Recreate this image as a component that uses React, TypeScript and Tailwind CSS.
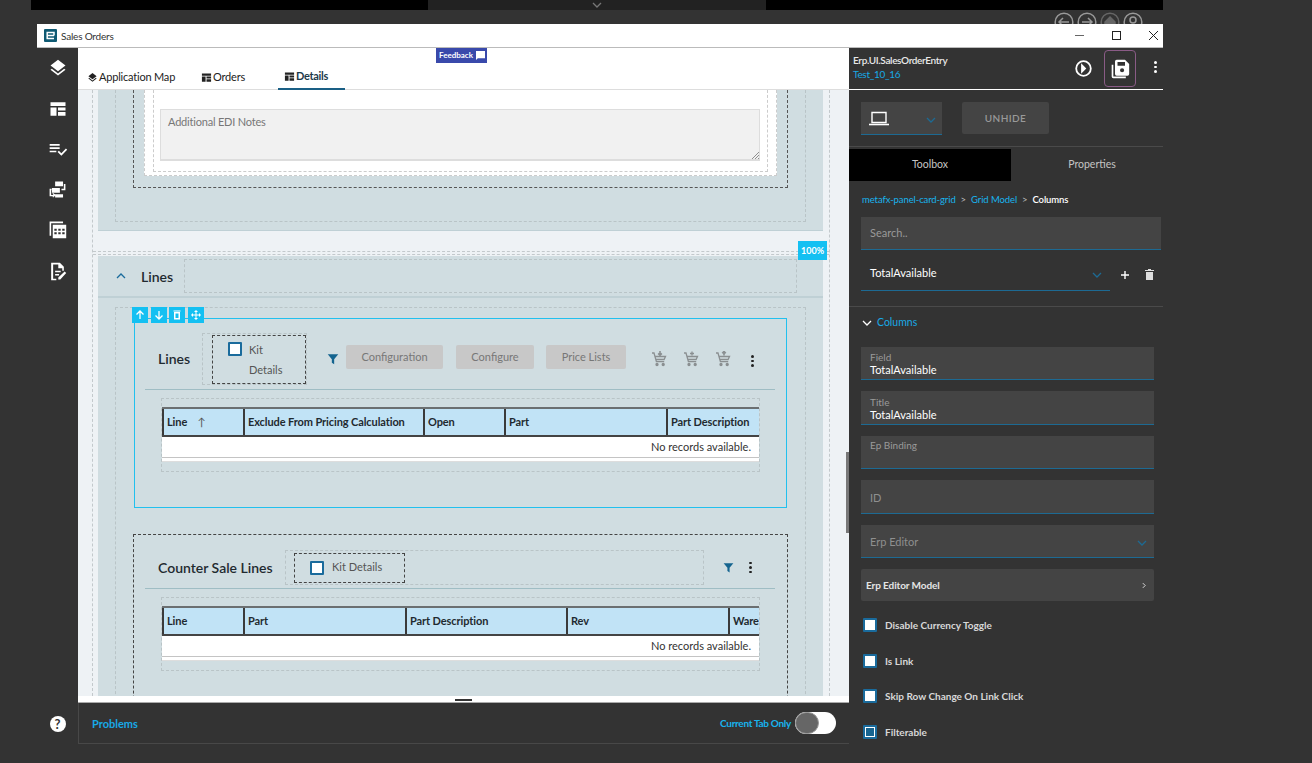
import type { ReactNode } from 'react'

/* Small inline icons: everything here is a 24 box unless noted */
function Ico({ size, className, children }: { size: number; className?: string; children: ReactNode }) {
  return (
    <svg width={size} height={size} viewBox="0 0 24 24" fill="currentColor" className={className}>
      {children}
    </svg>
  )
}

const LAYERS =
  'M11.99 18.54l-7.37-5.73L3 14.07l9 7 9-7-1.63-1.27-7.38 5.74zM12 16l7.36-5.73L21 9l-9-7-9 7 1.63 1.27L12 16z'
const TABLE = 'M2 3h20v5H2zM2 10h8v11H2zM12 10h10v4H12zM12 16h10v5H12z'
const FILTER = 'M3 4h18l-7 8.5V21l-4-2.5v-6z'

function Cart({ kind }: { kind: 'down' | 'plus' | 'up' }) {
  return (
    <svg width="16" height="16" viewBox="0 0 16 16" fill="none" stroke="#8a8f91" strokeWidth="1.3">
      <path d="M1 2h2l2.4 8.6h7.8M4 5.5h10.5l-1.4 3H4.8" />
      <circle cx="6" cy="13.5" r="1" fill="#8a8f91" />
      <circle cx="12.2" cy="13.5" r="1" fill="#8a8f91" />
      {kind === 'down' && <path d="M9 0v4M7.2 2.4L9 4.4l1.8-2" strokeWidth="1.6" />}
      {kind === 'plus' && <path d="M9 0.5v4M7 2.5h4" strokeWidth="1.3" />}
      {kind === 'up' && <path d="M9 4.5v-4M7.2 2.2L9 0.4l1.8 1.8" strokeWidth="1.6" />}
    </svg>
  )
}

function Kebab({ className }: { className: string }) {
  return (
    <span className={`flex flex-col gap-[2px] ${className}`}>
      <span className="h-[2.5px] w-[2.5px] rounded-full bg-current" />
      <span className="h-[2.5px] w-[2.5px] rounded-full bg-current" />
      <span className="h-[2.5px] w-[2.5px] rounded-full bg-current" />
    </span>
  )
}

function Chevron({ className }: { className: string }) {
  return (
    <svg width="10" height="6" viewBox="0 0 10 6" fill="none" stroke="currentColor" strokeWidth="1.3" className={className}>
      <path d="M1 1l4 4 4-4" />
    </svg>
  )
}

function NavCircle({ dim, d }: { dim?: boolean; d: string }) {
  return (
    <svg width="20" height="20" viewBox="0 0 20 20" fill="none" stroke={dim ? '#666' : '#999'} strokeWidth="1.5">
      <circle cx="10" cy="10" r="8.8" />
      <path d={d} fill={dim ? '#666' : 'none'} />
    </svg>
  )
}

function GridTable({ cols }: { cols: { label: string; w: number; sort?: boolean }[] }) {
  return (
    <div className="mt-[8px] h-[74px] w-[599px] border border-dashed border-[#b9c4c7] pt-[8px]">
      <div className="flex h-[30px] w-[597px] overflow-hidden border-t-2 border-b-2 border-t-[#6b6f71] border-b-[#444] bg-[#c1e3f6]">
        {cols.map((c) => (
          <div
            key={c.label}
            style={{ width: c.w }}
            className="flex shrink-0 items-center overflow-hidden whitespace-nowrap border-l-2 border-[#3a3a3a] pl-[3px] text-[11px] font-bold tracking-[-0.1px] text-[#1f2a30]"
          >
            {c.label}
            {c.sort && <span className="ml-[10px] text-[11px] font-normal text-[#555]">↑</span>}
          </div>
        ))}
      </div>
      <div className="flex h-[20px] w-[597px] items-center justify-end bg-white pr-[8px] text-[11px] text-[#333]">
        No records available.
      </div>
      <div className="h-[5px] w-[597px] border-t border-b border-t-[#c4c4c4] border-b-[#ddd] bg-white" />
    </div>
  )
}

function Field({ label, value, tall, mt }: { label: string; value?: string; tall?: boolean; mt: string }) {
  return (
    <div className={`${mt} ${tall ? 'h-[34px]' : 'h-[33px]'} ml-[12px] flex w-[293px] flex-col justify-center border-b border-[#1d6a93] bg-[#444] pl-[9px] pt-[3px]`}>
      {value ? (
        <>
          <span className="text-[10px] leading-[11px] text-[#9a9a9a]">{label}</span>
          <span className="text-[11px] leading-[14px] text-white">{value}</span>
        </>
      ) : (
        <span className="text-[11px] text-[#8f8f8f]">{label}</span>
      )}
    </div>
  )
}

function Check({ label, on, mt }: { label: string; on?: boolean; mt: string }) {
  return (
    <div className={`${mt} ml-[14px] flex h-[14px] items-center`}>
      <span className={`h-[14px] w-[14px] rounded-[1px] border-2 border-[#1a6b9c] ${on ? 'bg-[#17648f] outline outline-1 -outline-offset-3 outline-white' : 'bg-white'}`} />
      <span className="ml-[8px] text-[10px] font-bold text-[#d8d8d8]">{label}</span>
    </div>
  )
}

function Sidebar() {
  return (
    <div className="flex w-[41px] shrink-0 flex-col items-center text-white">
      <Ico size={20} className="mt-[10px]"><path d={LAYERS} /></Ico>
      <Ico size={18} className="mt-[22px]"><path d={TABLE} /></Ico>
      <Ico size={20} className="mt-[21px]">
        <path d="M14 10H2v2h12v-2zm0-4H2v2h12V6zM2 16h8v-2H2v2zm19.5-4.5L23 13l-6.99 7-4.51-4.5L13 14l3.01 3 5.49-5.5z" />
      </Ico>
      <Ico size={19} className="mt-[21px]">
        <path d="M9 2h10v6H9zM5 10h10v6H5zM9 18h10v4H9zM20 5h2v8h-5v-2h3zM3 11h1.500v2H4v6h3l-1.500-1.500 1-1L10 19l-3.500 3-1-1L7 20.500H2V11z" />
      </Ico>
      <Ico size={19} className="mt-[21px]">
        <path d="M2 2h17v2H4v16H2z" />
        <path fillRule="evenodd" d="M6 6h17v17H6zM8 11v2.500h3V11zm5 0v2.500h3V11zm5 0v2.500h3V11zM8 15.500V18h3v-2.500zm5 0V18h3v-2.500zm5 0V18h3v-2.500z" />
      </Ico>
      <Ico size={19} className="mt-[23px]">
        <path d="M5 1h10l5 5v5h-2V8h-5V3H6.500v18h4v2H4V1zM9 11h7v2H9zM9 15h5v2H9zM21 12l2 2-7.500 8H13v-2.500z" />
      </Ico>
      <div className="mt-[435px] flex h-[16px] w-[16px] items-center justify-center rounded-full bg-white text-[13px] font-bold leading-none text-[#333]">
        ?
      </div>
    </div>
  )
}

function MainPanel() {
  return (
    <div className="flex w-[771px] shrink-0 flex-col">
      {/* tab strip */}
      <div className="relative flex h-[42px] shrink-0 items-end border-b border-[#ddd] bg-white text-[11px] tracking-[-0.2px] text-[#222]">
        <div className="ml-[9px] flex h-[24px] w-[114px] items-center">
          <Ico size={11} className="text-[#222]"><path d={LAYERS} /></Ico>
          <span className="ml-[1px]">Application Map</span>
        </div>
        <div className="flex h-[24px] w-[77px] items-center">
          <Ico size={11}><path d={TABLE} /></Ico>
          <span className="ml-[1px]">Orders</span>
        </div>
        <div className="mb-[-1px] flex h-[25px] w-[67px] items-center border-b-2 border-[#1a5f85] pl-[6px]">
          <Ico size={11}><path d={TABLE} /></Ico>
          <span className="ml-[1px] font-bold tracking-[-0.3px] text-[#1b3a4b]">Details</span>
        </div>
        <div className="absolute left-[358px] top-0 flex h-[15px] w-[51px] items-center bg-[#3949ab] pb-[1px] pl-[3px] text-[8px] font-bold tracking-normal text-white">
          Feedback
          <svg width="9" height="9" viewBox="0 0 10 10" className="ml-[3px]" fill="white"><path d="M0 0h10v8H2L0 10z" /></svg>
        </div>
      </div>

      {/* design canvas, scrolled so that the first card is cut off at the top */}
      <div className="relative h-[606px] shrink-0 overflow-hidden bg-[#eef2f5]">
        <div className="ml-[14px] h-[606px] w-[738px] border-x border-dashed border-[#c3c9cc]">
          <div className="ml-[5px] h-[141px] w-[725px] border-b border-[#bfd0d5] bg-[#d0dde1]">
            <div className="ml-[17px] h-[132px] w-[691px] border-x border-b border-dashed border-[#b9c4c7]">
              <div className="ml-[17px] h-[98px] w-[655px] border-x border-b border-dashed border-[#555]">
                <div className="ml-[10px] h-[86px] w-[633px] border-x border-b border-dashed border-[#ccc] bg-white">
                  <div className="ml-[8px] h-[82px] w-[615px] border-x border-b border-dashed border-[#ccc] pl-[6px] pt-[19px]">
                    <div className="relative h-[52px] w-[600px] border border-b-2 border-[#ddd] bg-[#f1f1f1] pl-[7px] pt-[4px] text-[11px] tracking-[-0.2px] text-[#777]">
                      Additional EDI Notes
                      <svg width="8" height="8" viewBox="0 0 8 8" stroke="#777" strokeWidth="0.8" className="absolute bottom-0 right-0">
                        <path d="M1 8l7-7M4 8l4-4M7 8l1-1" />
                      </svg>
                    </div>
                  </div>
                </div>
              </div>
            </div>
          </div>
          <div className="mt-[20px] h-[4px] border-y border-dashed border-[#c3c9cc]" />

          <div className="ml-[5px] mt-[1px] w-[725px] bg-[#d0dde1]">
            {/* Lines panel header */}
            <div className="flex h-[42px] items-center border-b-2 border-[#bfd0d5]">
              <Chevron className="ml-[18px] rotate-180 text-[#1a6b9c]" />
              <span className="ml-[15px] w-[43px] text-[14px] font-semibold text-[#1f2a30]">Lines</span>
              <div className="h-[34px] w-[613px] border border-dashed border-[#b9c4c7]" />
            </div>

            <div className="ml-[17px] mt-[9px] w-[691px] border-x border-t border-dashed border-[#b9c4c7] pt-[10px]">
              {/* selected card */}
              <div className="relative ml-[18px] h-[190px] w-[653px] border border-[#22c0ee]">
                <div className="absolute -left-[3px] -top-[12px] flex gap-[2.5px]">
                  {[
                    <path key="a" d="M12 20V5M5 11l7-7 7 7" fill="none" stroke="white" strokeWidth="2.500" />,
                    <path key="b" d="M12 4v15M5 13l7 7 7-7" fill="none" stroke="white" strokeWidth="2.500" />,
                    <path key="c" fillRule="evenodd" d="M5 3h14v2H5zM6 6h12v15H6zM9 9v9h6V9z" fill="white" />,
                    <path key="d" d="M12 2l4 4h-3v5h5V8l4 4-4 4v-3h-5v5h3l-4 4-4-4h3v-5H6v3l-4-4 4-4v3h5V6H8z" fill="white" />,
                  ].map((p) => (
                    <span key={p.key} className="flex h-[16px] w-[16px] items-center justify-center bg-[#14c0f2]">
                      <svg width="12" height="12" viewBox="0 0 24 24">{p}</svg>
                    </span>
                  ))}
                </div>

                <div className="mt-[14px] flex h-[52px] items-center">
                  <span className="ml-[23px] w-[44px] pb-[1px] text-[14px] font-semibold text-[#1f2a30]">Lines</span>
                  <div className="flex h-[52px] w-[105px] items-center border border-dashed border-[#b9c4c7] pl-[9px]">
                    <div className="flex h-[49px] w-[94px] border border-dashed border-[#444] pl-[15px] pt-[6px]">
                      <span className="h-[14px] w-[14px] shrink-0 rounded-[1px] border-2 border-[#1a6b9c] bg-white" />
                      <span className="-mt-[2px] ml-[7px] w-[40px] text-[11px] leading-[20px] text-[#555]">Kit Details</span>
                    </div>
                  </div>
                  <Ico size={14} className="ml-[19px] text-[#14648f]"><path d={FILTER} /></Ico>
                  <button type="button" className="-mt-[4px] ml-[6px] h-[24px] w-[97px] rounded-[2px] bg-[#c8c8c8] pt-[1px] text-[11px] text-[#777]">Configuration</button>
                  <button type="button" className="-mt-[4px] ml-[13px] h-[24px] w-[78px] rounded-[2px] bg-[#c8c8c8] pt-[1px] text-[11px] text-[#777]">Configure</button>
                  <button type="button" className="-mt-[4px] ml-[12px] h-[24px] w-[80px] rounded-[2px] bg-[#c8c8c8] pt-[1px] text-[11px] text-[#777]">Price Lists</button>
                  <div className="ml-[25px] flex gap-[16px]">
                    <Cart kind="down" />
                    <Cart kind="plus" />
                    <Cart kind="up" />
                  </div>
                  <Kebab className="ml-[20px] mt-[4px] text-[#222]" />
                </div>
                <div className="ml-[10px] mt-[4px] h-px w-[630px] bg-[#9fbdc4]" />
                <div className="ml-[26px]">
                  <GridTable
                    cols={[
                      { label: 'Line', w: 81, sort: true },
                      { label: 'Exclude From Pricing Calculation', w: 180 },
                      { label: 'Open', w: 81 },
                      { label: 'Part', w: 162 },
                      { label: 'Part Description', w: 93 },
                    ]}
                  />
                </div>
              </div>

              {/* Counter Sale Lines card */}
              <div className="ml-[17px] mt-[26px] h-[200px] w-[655px] border-x border-t border-dashed border-[#444]">
                <div className="mt-[15px] flex h-[35px] items-center">
                  <span className="ml-[24px] w-[127px] whitespace-nowrap text-[14px] font-semibold text-[#1f2a30]">Counter Sale Lines</span>
                  <div className="flex h-[35px] w-[419px] items-center border border-dashed border-[#b9c4c7] pl-[8px]">
                    <div className="flex h-[30px] w-[111px] items-center border border-dashed border-[#444] pl-[15px]">
                      <span className="h-[14px] w-[14px] shrink-0 rounded-[1px] border-2 border-[#1a6b9c] bg-white" />
                      <span className="ml-[8px] whitespace-nowrap text-[11px] text-[#555]">Kit Details</span>
                    </div>
                  </div>
                  <Ico size={13} className="ml-[18px] text-[#14648f]"><path d={FILTER} /></Ico>
                  <Kebab className="ml-[14px] text-[#222]" />
                </div>
                <div className="ml-[11px] mt-[3px] h-px w-[630px] bg-[#9fbdc4]" />
                <div className="ml-[27px]">
                  <GridTable
                    cols={[
                      { label: 'Line', w: 81 },
                      { label: 'Part', w: 162 },
                      { label: 'Part Description', w: 161 },
                      { label: 'Rev', w: 162 },
                      { label: 'Warehouse', w: 31 },
                    ]}
                  />
                </div>
              </div>
            </div>
          </div>
        </div>

        <div className="absolute left-[720px] top-[151px] flex h-[19px] w-[29px] items-center justify-center bg-[#14c0f2] text-[9px] font-bold text-white">
          100%
        </div>
        <div className="absolute right-0 top-[362px] h-[81px] w-[3px] bg-[#777]" />
      </div>

      {/* splitter */}
      <div className="flex h-[7px] shrink-0 justify-center border-b border-[#aaa] bg-white pt-[3px]">
        <span className="h-[2px] w-[17px] bg-[#333]" />
      </div>

      {/* problems bar */}
      <div className="flex h-[41px] shrink-0 items-center border-b border-l border-[#484848] bg-[#333]">
        <span className="ml-[13px] pt-[2px] text-[11px] font-bold text-[#18a9e6]">Problems</span>
        <span className="ml-auto pt-[1px] text-[10px] font-bold tracking-[-0.3px] text-[#18b4ee]">Current Tab Only</span>
        <div className="relative ml-[4px] mr-[13px] h-[22px] w-[41px] rounded-full bg-white">
          <span className="absolute left-0 top-0 h-[22px] w-[24px] rounded-full border border-[#999] bg-[#666]" />
        </div>
      </div>
    </div>
  )
}

function RightPanel() {
  return (
    <div className="w-[314px] shrink-0 bg-[#333]">
      <div className="flex h-[42px] border-b border-white">
        <div className="ml-[4px] mt-[5px] flex w-[222px] flex-col text-[10px] leading-[14px]">
          <span className="font-semibold tracking-[-0.35px] text-[#e8e8e8]">Erp.UI.SalesOrderEntry</span>
          <span className="tracking-[-0.3px] text-[#18a9e6]">Test_10_16</span>
        </div>
        <svg width="17" height="17" viewBox="0 0 17 17" fill="none" stroke="white" strokeWidth="1.8" className="mt-[12px]">
          <circle cx="8.500" cy="8.500" r="7.300" />
          <path d="M7 5.500l3 3-3 3z" fill="white" />
        </svg>
        <div className="ml-[12px] mt-[2px] flex h-[37px] w-[32px] items-center justify-center rounded-[4px] border border-[#8a5b86]">
          <svg width="20" height="20" viewBox="0 0 24 24" fill="white">
            <path fillRule="evenodd" d="M8 1h10l5 5v12a2 2 0 0 1-2 2H8a2 2 0 0 1-2-2V3a2 2 0 0 1 2-2zm1 2.500V8h9V3.500zM14.500 11a2.500 2.500 0 1 0 0 5 2.500 2.500 0 0 0 0-5z" />
            <path d="M2 7h2v14h15v2H4a2 2 0 0 1-2-2z" />
          </svg>
        </div>
        <Kebab className="ml-[18px] mt-[13px] text-white" />
      </div>

      <div className="flex h-[57px] border-b border-[#4a4a4a] pt-[12px]">
        <div className="ml-[12px] flex h-[33px] w-[81px] items-center border-b border-[#1d6a93] bg-[#444] pl-[8px]">
          <svg width="20" height="15" viewBox="0 0 20 15" fill="none" stroke="white" strokeWidth="1.400">
            <path d="M3 1.500h14v10H3z" />
            <path d="M0 13.500h20" strokeWidth="1.600" />
          </svg>
          <Chevron className="ml-[37px] mt-[3px] text-[#1d6a93]" />
        </div>
        <div className="ml-[20px] flex h-[32px] w-[87px] items-center justify-center rounded-[2px] bg-[#444] pt-[1px] text-[10px] font-semibold tracking-[0.4px] text-[#999]">
          UNHIDE
        </div>
      </div>

      <div className="mt-[2px] flex h-[32px] text-[10.5px] text-[#c4c4c4]">
        <div className="flex w-[162px] items-center justify-center bg-black">Toolbox</div>
        <div className="flex flex-1 items-center justify-center pl-[10px]">Properties</div>
      </div>

      <div className="ml-[13px] mt-[13px] flex h-[13px] items-center text-[9.5px] tracking-[-0.1px]">
        <span className="text-[#18b4ee]">metafx-panel-card-grid</span>
        <span className="mx-[5px] text-[#bbb]">&gt;</span>
        <span className="text-[#18b4ee]">Grid Model</span>
        <span className="mx-[5px] text-[#bbb]">&gt;</span>
        <span className="font-semibold text-white">Columns</span>
      </div>

      <div className="ml-[12px] mt-[10px] flex h-[33px] w-[300px] items-center border-b border-[#1d6a93] bg-[#444] pl-[9px] text-[11px] text-[#9a9a9a]">
        Search..
      </div>

      <div className="mt-[8px] flex h-[33px] items-center">
        <div className="ml-[12px] flex h-[33px] w-[249px] items-center border-b border-[#1d6a93] pb-[1px] pl-[9px] text-[11px] text-white">
          TotalAvailable
          <Chevron className="ml-auto mr-[8px] mt-[3px] text-[#1d6a93]" />
        </div>
        <svg width="10" height="10" viewBox="0 0 10 10" stroke="white" strokeWidth="1.400" className="ml-[10px]"><path d="M5 1v8M1 5h8" /></svg>
        <svg width="9" height="11" viewBox="0 0 9 11" fill="#ddd" className="ml-[15px]"><path d="M0 1h9v1H0zM3 0h3v1H3zM1 3h7v8H1z" /></svg>
      </div>

      <div className="mt-[15px] h-px bg-[#4a4a4a]" />

      <div className="ml-[13px] mt-[11px] flex h-[10px] items-center">
        <Chevron className="text-white" />
        <span className="ml-[5px] text-[10.5px] text-[#18a9e6]">Columns</span>
      </div>

      <Field label="Field" value="TotalAvailable" mt="mt-[19px]" />
      <Field label="Title" value="TotalAvailable" tall mt="mt-[11px]" />
      <div className="ml-[12px] mt-[11px] flex h-[33px] w-[293px] border-b border-[#1d6a93] bg-[#444] pl-[9px] pt-[2px] text-[10px] text-[#9a9a9a]">
        Ep Binding
      </div>
      <Field label="ID" tall mt="mt-[11px]" />
      <div className="ml-[12px] mt-[11px] flex h-[33px] w-[293px] items-center border-b border-[#1d6a93] bg-[#444] pl-[9px] pt-[3px] text-[11px] text-[#8f8f8f]">
        Erp Editor
        <Chevron className="ml-auto mr-[7px] text-[#1d6a93]" />
      </div>
      <div className="ml-[12px] mt-[11px] flex h-[32px] w-[293px] items-center rounded-[2px] bg-[#444] pl-[5px] text-[10px] font-bold tracking-[-0.1px] text-[#e4e4e4]">
        Erp Editor Model
        <Chevron className="ml-auto mr-[7px] h-[7px] w-[6px] -rotate-90 text-white" />
      </div>

      <Check label="Disable Currency Toggle" mt="mt-[17px]" />
      <Check label="Is Link" mt="mt-[22px]" />
      <Check label="Skip Row Change On Link Click" mt="mt-[21px]" />
      <Check label="Filterable" on mt="mt-[22px]" />
    </div>
  )
}

export default function App() {
  return (
    <div className="h-[763px] w-[1312px] overflow-hidden bg-[#333] font-['Lato',sans-serif]">
      {/* what shows of the window behind */}
      <div className="relative h-[24px] overflow-hidden">
        <div className="ml-[31px] flex h-[10px] w-[1132px] justify-center bg-black">
          <div className="flex h-[10px] w-[338px] justify-center bg-[#222] pt-[2px]">
            <Chevron className="text-[#777]" />
          </div>
        </div>
        <div className="absolute left-[1054px] top-[12px] flex gap-[3px]">
          <NavCircle d="M15 10H5M9 6l-4 4 4 4" />
          <NavCircle d="M5 10h10M11 6l4 4-4 4" />
          <NavCircle dim d="M10 5l5 5v4H5v-4z" />
          <NavCircle d="M10 5a3 3 0 1 0 0 6 3 3 0 0 0 0-6zM6 16c1-3 7-3 8 0" />
        </div>
      </div>

      <div className="ml-[37px] w-[1126px]">
        {/* title bar */}
        <div className="flex h-[24px] items-center border-b border-[#bbb] bg-white">
          <span className="ml-[7px] flex h-[13px] w-[13px] items-center justify-center rounded-[1px] bg-[#0f5a73]">
            <svg width="9" height="9" viewBox="0 0 9 9" fill="none" stroke="white" strokeWidth="1.500">
              <path d="M8 4.500H1.200M8 4.500V1.500H1.200v6H8" />
            </svg>
          </span>
          <span className="ml-[4px] pt-[1px] text-[10px] tracking-[-0.2px] text-[#333]">Sales Orders</span>
          <span className="ml-auto mr-[28px] h-[1.5px] w-[9px] bg-[#666]" />
          <span className="mr-[28px] h-[9px] w-[9px] border-[1.5px] border-[#222]" />
          <svg width="9" height="9" viewBox="0 0 9 9" stroke="#222" strokeWidth="1" className="mr-[5px]"><path d="M0 0l9 9M9 0l-9 9" /></svg>
        </div>

        <div className="flex h-[695px]">
          <Sidebar />
          <MainPanel />
          <RightPanel />
        </div>
      </div>
    </div>
  )
}
